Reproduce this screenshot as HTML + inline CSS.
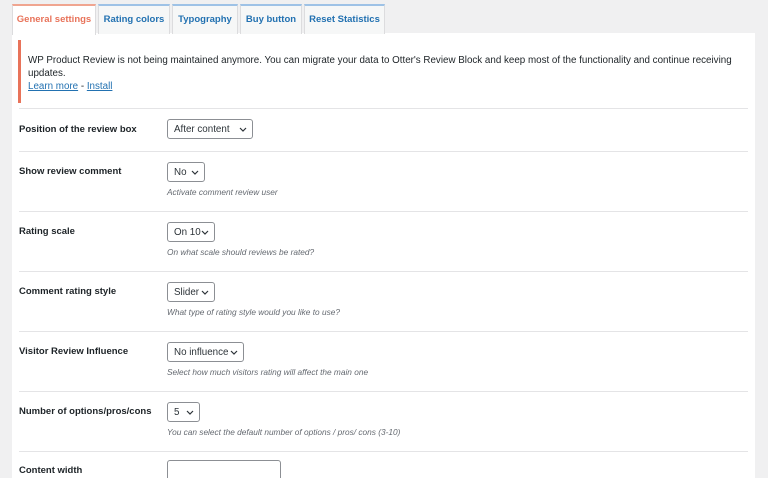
<!DOCTYPE html>
<html><head><style>
*{box-sizing:border-box;margin:0;padding:0}
html,body{width:768px;height:478px;overflow:hidden}
body{background:#f0f0f1;font-family:"Liberation Sans",sans-serif;color:#1d2327;position:relative;font-size:10px}
.a{position:absolute}
.tab{position:absolute;top:4px;height:30px;background:#f6f7f7;border-top:2px solid #9ec2e6;border-left:1px solid #dcdcde;border-right:1px solid #dcdcde;color:#2271b1;font-size:9.5px;font-weight:bold;text-align:center;line-height:27px}
.tab.act{background:#fff;color:#e8735a;border-top-color:#f0a590;height:31px;z-index:2}
.panel{position:absolute;left:12px;top:33px;width:743px;height:460px;background:#fff}
.sep{position:absolute;left:19px;width:729px;height:1px;background:#e4e4e6}
.lbl{position:absolute;left:19px;font-size:9.5px;font-weight:bold;color:#1d2327}
.sel{position:absolute;left:167px;height:20px;border:1px solid #8c8f94;border-radius:3px;background:#fff;font-size:9.8px;line-height:20px;padding-left:6px;color:#2c3338;white-space:nowrap}
.sel svg{position:absolute;right:5px;top:7px}
.desc{position:absolute;left:167px;font-size:8.3px;font-style:italic;color:#646970}
</style></head><body>
<div class="panel"></div>
<div class="tab act" style="left:12px;width:84px">General settings</div>
<div class="tab" style="left:98px;width:72px">Rating colors</div>
<div class="tab" style="left:172px;width:66px">Typography</div>
<div class="tab" style="left:240px;width:62px">Buy button</div>
<div class="tab" style="left:304px;width:81px">Reset Statistics</div>

<div class="a" style="left:18px;top:40px;width:3px;height:63px;background:#e8735a"></div>
<div class="a" style="left:28px;top:54px;width:720px;font-size:9.8px;line-height:13px;color:#1d2327">WP Product Review is not being maintained anymore. You can migrate your data to Otter's Review Block and keep most of the functionality and continue receiving updates.<br><span style="color:#2271b1;text-decoration:underline">Learn more</span> - <span style="color:#2271b1;text-decoration:underline">Install</span></div>

<div class="sep" style="top:108px"></div>
<div class="lbl" style="top:124px">Position of the review box</div>
<div class="sel" style="top:119px;width:86px">After content<svg width="8" height="6"><path d="M1 1l3 3 3-3" stroke="#2c3338" fill="none" stroke-width="1.2"/></svg></div>

<div class="sep" style="top:151px"></div>
<div class="lbl" style="top:166px">Show review comment</div>
<div class="sel" style="top:162px;width:38px">No<svg width="8" height="6"><path d="M1 1l3 3 3-3" stroke="#2c3338" fill="none" stroke-width="1.2"/></svg></div>
<div class="desc" style="top:187px">Activate comment review user</div>

<div class="sep" style="top:211px"></div>
<div class="lbl" style="top:226px">Rating scale</div>
<div class="sel" style="top:222px;width:48px">On 10<svg width="8" height="6"><path d="M1 1l3 3 3-3" stroke="#2c3338" fill="none" stroke-width="1.2"/></svg></div>
<div class="desc" style="top:247px">On what scale should reviews be rated?</div>

<div class="sep" style="top:271px"></div>
<div class="lbl" style="top:286px">Comment rating style</div>
<div class="sel" style="top:282px;width:48px">Slider<svg width="8" height="6"><path d="M1 1l3 3 3-3" stroke="#2c3338" fill="none" stroke-width="1.2"/></svg></div>
<div class="desc" style="top:307px">What type of rating style would you like to use?</div>

<div class="sep" style="top:331px"></div>
<div class="lbl" style="top:346px">Visitor Review Influence</div>
<div class="sel" style="top:342px;width:77px">No influence<svg width="8" height="6"><path d="M1 1l3 3 3-3" stroke="#2c3338" fill="none" stroke-width="1.2"/></svg></div>
<div class="desc" style="top:367px">Select how much visitors rating will affect the main one</div>

<div class="sep" style="top:391px"></div>
<div class="lbl" style="top:406px">Number of options/pros/cons</div>
<div class="sel" style="top:402px;width:33px">5<svg width="8" height="6"><path d="M1 1l3 3 3-3" stroke="#2c3338" fill="none" stroke-width="1.2"/></svg></div>
<div class="desc" style="top:427px">You can select the default number of options / pros/ cons (3-10)</div>

<div class="sep" style="top:451px"></div>
<div class="lbl" style="top:465px">Content width</div>
<div class="sel" style="top:460px;width:114px;height:22px"></div>
</body></html>
